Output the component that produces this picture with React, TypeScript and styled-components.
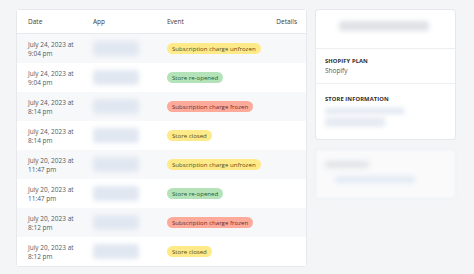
import styled, { createGlobalStyle } from 'styled-components';

const GlobalStyle = createGlobalStyle`
  *, *::before, *::after {
    box-sizing: border-box;
  }

  html, body {
    margin: 0;
    padding: 0;
    background: #f4f5f7;
    font-family: 'Open Sans', 'Liberation Sans', sans-serif;
    color: #303030;
  }
`;

type Tone = 'warning' | 'success' | 'critical';

const events = [
  { date: 'July 24, 2023 at', time: '9:04 pm', label: 'Subscription charge unfrozen', tone: 'warning' },
  { date: 'July 24, 2023 at', time: '9:04 pm', label: 'Store re-opened', tone: 'success' },
  { date: 'July 24, 2023 at', time: '8:14 pm', label: 'Subscription charge frozen', tone: 'critical' },
  { date: 'July 24, 2023 at', time: '8:14 pm', label: 'Store closed', tone: 'warning' },
  { date: 'July 20, 2023 at', time: '11:47 pm', label: 'Subscription charge unfrozen', tone: 'warning' },
  { date: 'July 20, 2023 at', time: '11:47 pm', label: 'Store re-opened', tone: 'success' },
  { date: 'July 20, 2023 at', time: '8:12 pm', label: 'Subscription charge frozen', tone: 'critical' },
  { date: 'July 20, 2023 at', time: '8:12 pm', label: 'Store closed', tone: 'warning' },
] as { date: string; time: string; label: string; tone: Tone }[];

const toneColors: Record<Tone, { bg: string; fg: string }> = {
  warning: { bg: '#ffea8a', fg: '#5a4a10' },
  success: { bg: '#b4e3b9', fg: '#245b2f' },
  critical: { bg: '#fdaa9b', fg: '#6e2a20' },
};

const Page = styled.div`
  display: flex;
  align-items: flex-start;
  gap: 10px;
  padding: 10px 0 0 17px;
  height: 274px;
  overflow: hidden;
`;

const TableCard = styled.section`
  width: 289px;
  flex-shrink: 0;
  background: #fff;
  border-radius: 3px;
  box-shadow: 0 0 0 1px #e6e8eb;
`;

const Row = styled.div<{ $shaded?: boolean; $header?: boolean }>`
  display: grid;
  grid-template-columns: 65px 74px 1fr auto;
  align-items: center;
  height: ${(p) => (p.$header ? '24px' : '29px')};
  padding: 0 9px 0 11px;
  background: ${(p) => (p.$shaded ? '#f7f8fa' : '#fff')};
  border-bottom: ${(p) => (p.$header ? '1px solid #e7e9ec' : 'none')};
  font-size: 6.5px;
`;

const HeadCell = styled.div<{ $right?: boolean }>`
  color: #3b3b3b;
  text-align: ${(p) => (p.$right ? 'right' : 'left')};
`;

const DateCell = styled.div`
  color: #555a60;
  line-height: 9px;
`;

const BlurBox = styled.div<{ $w: number; $h: number; $color?: string }>`
  width: ${(p) => p.$w}px;
  height: ${(p) => p.$h}px;
  background: ${(p) => p.$color || '#e1e7f1'};
  border-radius: 3px;
  filter: blur(2.5px);
`;

const Badge = styled.span<{ $tone: Tone }>`
  justify-self: start;
  display: inline-flex;
  align-items: center;
  height: 11px;
  padding: 0 5px;
  border-radius: 6px;
  background: ${(p) => toneColors[p.$tone].bg};
  color: ${(p) => toneColors[p.$tone].fg};
  font-size: 6.1px;
  white-space: nowrap;
`;

const Side = styled.aside`
  width: 139px;
  display: flex;
  flex-direction: column;
  gap: 11px;
`;

const InfoCard = styled.section<{ $faded?: boolean }>`
  background: #fff;
  border-radius: 3px;
  box-shadow: 0 0 0 1px #e6e8eb;
  opacity: ${(p) => (p.$faded ? 0.55 : 1)};
  filter: ${(p) => (p.$faded ? 'blur(0.8px)' : 'none')};
`;

const InfoSection = styled.div<{ $h: number }>`
  height: ${(p) => p.$h}px;
  padding: 0 9px;
  display: flex;
  flex-direction: column;
  justify-content: center;
  gap: 3px;
  border-bottom: 1px solid #eceef1;

  &:last-child {
    border-bottom: none;
  }
`;

const TopSection = styled(InfoSection)`
  justify-content: flex-start;
  padding-top: 11px;
`;

const Caption = styled.div`
  font-size: 5.8px;
  font-weight: 700;
  color: #2c2c2c;
  letter-spacing: 0.1px;
`;

const Value = styled.div`
  font-size: 6.5px;
  color: #555a60;
  margin-top: -2px;
`;

export default function App() {
  return (
    <>
      <GlobalStyle />
      <Page>
        <TableCard>
          <Row $header>
            <HeadCell>Date</HeadCell>
            <HeadCell>App</HeadCell>
            <HeadCell>Event</HeadCell>
            <HeadCell $right>Details</HeadCell>
          </Row>
          {events.map((event, index) => (
            <Row key={index} $shaded={index % 2 === 0}>
              <DateCell>
                {event.date}
                <br />
                {event.time}
              </DateCell>
              <BlurBox $w={46} $h={15} />
              <Badge $tone={event.tone}>{event.label}</Badge>
              <span />
            </Row>
          ))}
        </TableCard>
        <Side>
          <InfoCard>
            <TopSection $h={39}>
              <BlurBox $w={90} $h={10} $color="#dfe1e5" style={{ marginLeft: 14 }} />
            </TopSection>
            <InfoSection $h={35}>
              <Caption>SHOPIFY PLAN</Caption>
              <Value>Shopify</Value>
            </InfoSection>
            <TopSection $h={55}>
              <Caption>STORE INFORMATION</Caption>
              <BlurBox $w={80} $h={6} style={{ marginTop: 2 }} />
              <BlurBox $w={60} $h={10} $color="#e6eaf2" />
            </TopSection>
          </InfoCard>
          <InfoCard $faded>
            <TopSection $h={48}>
              <BlurBox $w={44} $h={7} $color="#d4d6da" />
              <BlurBox $w={80} $h={7} $color="#d6e2f3" style={{ marginTop: 5, marginLeft: 10 }} />
            </TopSection>
          </InfoCard>
        </Side>
      </Page>
    </>
  );
}
